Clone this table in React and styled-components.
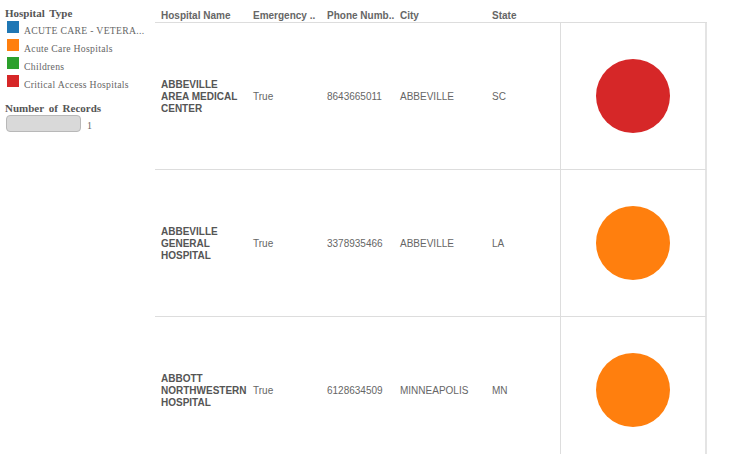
import React from 'react';
import styled, { createGlobalStyle } from 'styled-components';

const GlobalStyle = createGlobalStyle`
  html, body {
    margin: 0;
    padding: 0;
    background: #fff;
    overflow: hidden;
  }
`;

const legendItems = [
  { label: 'ACUTE CARE - VETERA...', color: '#1f77b4' },
  { label: 'Acute Care Hospitals', color: '#ff7f0e' },
  { label: 'Childrens', color: '#2ca02c' },
  { label: 'Critical Access Hospitals', color: '#d62728' },
];

const rows = [
  { name: 'ABBEVILLE AREA MEDICAL CENTER', emergency: 'True', phone: '8643665011', city: 'ABBEVILLE', state: 'SC', color: '#d62728' },
  { name: 'ABBEVILLE GENERAL HOSPITAL', emergency: 'True', phone: '3378935466', city: 'ABBEVILLE', state: 'LA', color: '#ff7f0e' },
  { name: 'ABBOTT NORTHWESTERN HOSPITAL', emergency: 'True', phone: '6128634509', city: 'MINNEAPOLIS', state: 'MN', color: '#ff7f0e' },
];

function App() {
  return (
    <Page>
      <GlobalStyle />
      <Legend>
        <LegendTitle>Hospital Type</LegendTitle>
        {legendItems.map((item) => (
          <LegendRow key={item.label}>
            <Swatch color={item.color} />
            <LegendLabel>{item.label}</LegendLabel>
          </LegendRow>
        ))}
        <LegendTitle gap>Number of Records</LegendTitle>
        <SizeRow>
          <SizeBar />
          <SizeValue>1</SizeValue>
        </SizeRow>
      </Legend>

      <Table>
        <HeaderCell>Hospital Name</HeaderCell>
        <HeaderCell>Emergency ..</HeaderCell>
        <HeaderCell>Phone Numb..</HeaderCell>
        <HeaderCell>City</HeaderCell>
        <HeaderCell>State</HeaderCell>
        <HeaderCell />
        {rows.map((r) => (
          <React.Fragment key={r.name}>
            <Cell bold>{r.name}</Cell>
            <Cell>{r.emergency}</Cell>
            <Cell>{r.phone}</Cell>
            <Cell>{r.city}</Cell>
            <Cell>{r.state}</Cell>
            <ChartCell>
              <Dot color={r.color} />
            </ChartCell>
          </React.Fragment>
        ))}
      </Table>
    </Page>
  );
}

const Page = styled.div`
  display: flex;
  align-items: flex-start;
  height: 454px;
  overflow: hidden;
`;

const Legend = styled.div`
  width: 155px;
  flex-shrink: 0;
  padding: 7px 0 0 5px;
  box-sizing: border-box;
  font-family: 'Liberation Serif', 'Times New Roman', serif;
`;

const LegendTitle = styled.div`
  font-size: 11px;
  font-weight: bold;
  color: #555;
  word-spacing: 2px;
  margin-top: ${(p) => (p.gap ? '10px' : '0')};
  line-height: 13px;
`;

const LegendRow = styled.div`
  display: flex;
  align-items: center;
  height: 18px;
  margin-left: 2px;
`;

const Swatch = styled.span`
  width: 12px;
  height: 12px;
  background: ${(p) => p.color};
  flex-shrink: 0;
  margin-right: 5px;
  position: relative;
  top: -2px;
`;

const LegendLabel = styled.span`
  font-size: 9.7px;
  color: #666;
  letter-spacing: 0.3px;
  white-space: nowrap;
  position: relative;
  top: 1px;
`;

const SizeRow = styled.div`
  display: flex;
  align-items: flex-end;
  margin-left: 1px;
`;

const SizeBar = styled.div`
  width: 73px;
  height: 15px;
  background: #d9d9d9;
  border: 1px solid #b8b8b8;
  border-radius: 4px;
`;

const SizeValue = styled.span`
  font-size: 10px;
  color: #666;
  margin-left: 6px;
  line-height: 12px;
`;

const Table = styled.div`
  display: grid;
  grid-template-columns: 92px 74px 73px 92px 74px 147px;
  grid-template-rows: 23px repeat(3, 147px);
  font-family: 'Liberation Sans', Arial, sans-serif;
  font-size: 10px;
`;

const HeaderCell = styled.div`
  padding: 10px 0 0 6px;
  font-weight: bold;
  color: #666;
  white-space: nowrap;
  border-bottom: 1px solid #ddd;
  box-sizing: border-box;
  line-height: 11px;
`;

const Cell = styled.div`
  display: flex;
  align-items: center;
  padding: 2px 4px 0 6px;
  color: ${(p) => (p.bold ? '#555' : '#666')};
  font-weight: ${(p) => (p.bold ? 'bold' : 'normal')};
  line-height: 12px;
  border-bottom: 1px solid #ddd;
  box-sizing: border-box;
`;

const ChartCell = styled.div`
  display: flex;
  align-items: center;
  justify-content: center;
  border-left: 1px solid #ddd;
  border-right: 2px solid #e4e4e4;
  border-bottom: 1px solid #ddd;
  box-sizing: border-box;
`;

const Dot = styled.span`
  width: 74px;
  height: 74px;
  border-radius: 50%;
  background: ${(p) => p.color};
`;

export default App;
